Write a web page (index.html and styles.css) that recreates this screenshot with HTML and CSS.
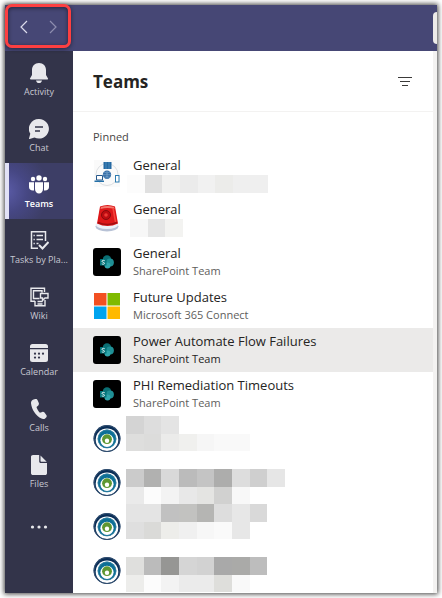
FILE: index.html
```html
<!DOCTYPE html>
<html lang="en">
<head>
    <meta charset="UTF-8">
    <meta name="viewport" content="width=device-width, initial-scale=1.0">
    <title>Teams</title>
    <link rel="stylesheet" href="styles.css">
</head>
<body>
    <!-- Shared avatar artwork -->
    <svg class="defs" aria-hidden="true">
        <symbol id="sharepoint" viewBox="0 0 28 28">
            <circle cx="14" cy="11.500" r="4.200" fill="#0b6f74"/>
            <circle cx="17" cy="14.500" r="3.900" fill="#1f8f95"/>
            <circle cx="14.500" cy="17.500" r="3" fill="#2fa6ac"/>
            <rect x="7" y="11" width="6.500" height="6.500" rx="0.500" fill="#04757b"/>
            <path d="M11.700 12.700c-1.300-.7-2.800-.3-2.700.7.1 1 2.600.8 2.500 1.900-.1 1-1.500 1.200-2.700.5" fill="none" stroke="#fff" stroke-width="0.900"/>
        </symbol>
        <symbol id="rings" viewBox="0 0 28 28">
            <circle cx="14" cy="14.500" r="13.500" fill="#0a2e57"/>
            <circle cx="14" cy="15.800" r="11.300" fill="#fff"/>
            <circle cx="14" cy="14.500" r="13" fill="none" stroke="#3d5877" stroke-width="0.800"/>
            <circle cx="14" cy="14.800" r="9.300" fill="#0d7096"/>
            <circle cx="14" cy="16.300" r="6.600" fill="#fff"/>
            <circle cx="14" cy="15" r="9" fill="none" stroke="#3d84a5" stroke-width="0.700"/>
            <circle cx="14" cy="15.200" r="4.900" fill="#5e9732"/>
            <circle cx="14" cy="16.800" r="2.200" fill="#fff"/>
        </symbol>
    </svg>

    <div class="window">
        <header class="topbar">
            <div class="history">
                <button type="button" aria-label="Back">
                    <svg width="8" height="14" viewBox="0 0 8 14"><path d="M7 1L1 7l6 6"/></svg>
                </button>
                <button type="button" class="forward" aria-label="Forward">
                    <svg width="8" height="14" viewBox="0 0 8 14"><path d="M1 1l6 6-6 6"/></svg>
                </button>
            </div>
            <input class="search" type="text" aria-label="Search">
        </header>

        <div class="content">
            <nav class="rail">
                <a class="rail-item" href="#">
                    <svg viewBox="0 0 20 20"><path fill="currentColor" d="M10 0C5.700 0 3 3.200 3 7v5L1 15.500c-.2.500 0 .9.500.9h17c.5 0 .7-.4.500-.9L17 12V7c0-3.800-2.700-7-7-7zM7 17.400h6c-.3 1.600-1.500 2.600-3 2.600s-2.700-1-3-2.600z"/></svg>
                    <span>Activity</span>
                </a>
                <a class="rail-item" href="#">
                    <svg viewBox="0 0 20 20"><path fill="currentColor" d="M10 0a10 9.800 0 1 1-4.500 18.600L.6 20c-.4.100-.7-.2-.6-.6l1.300-4.600A10 9.800 0 0 1 10 0z"/><path d="M6 8h8M6 12h5" stroke="#33344a" stroke-width="1.500"/></svg>
                    <span>Chat</span>
                </a>
                <a class="rail-item active" href="#">
                    <svg viewBox="0 0 20 20"><g fill="currentColor"><circle cx="10" cy="3" r="2.700"/><circle cx="4" cy="4" r="2.200"/><circle cx="16" cy="4" r="2.200"/><path d="M6 7.300h8V14a4 4.500 0 0 1-8 0zM0 7.300h5V15.500C2 16 0 14.500 0 12zM15 7.300h5V12c0 2.500-2 4-5 3.500z"/></g></svg>
                    <span>Teams</span>
                </a>
                <a class="rail-item" href="#">
                    <svg viewBox="0 0 20 20"><g fill="none" stroke="currentColor" stroke-width="1.500"><path d="M16.500 10V.8h-14v16.400H9"/><path d="M7.500 4.500h6.500M7.500 8.500h6.500M7.500 12.500h2M4.500 4.500h1.300M4.500 8.500h1.300M4.500 12.500h1.300"/><path d="M10 14l3.500 3.500 6-6.500" stroke-width="2"/></g></svg>
                    <span>Tasks by Pla...</span>
                </a>
                <a class="rail-item" href="#">
                    <svg viewBox="0 0 20 20"><g fill="none" stroke="currentColor" stroke-width="1.400"><path d="M15.500 5V1.200H2v13h4"/><path d="M10.500 11.500H4.500V3.800h8.500v2M6 14v4.800h10V13M8.500 14.500h5M8.500 17h5"/><path d="M11.500 6.500h7.500v4.500h-3l-2.500 2.500V11h-2z"/></g></svg>
                    <span>Wiki</span>
                </a>
                <a class="rail-item" href="#">
                    <svg viewBox="0 0 20 20"><path fill="currentColor" d="M3.500 1h13A2.500 2.500 0 0 1 19 3.500V5H1V3.500A2.500 2.500 0 0 1 3.500 1zM1 6.200h18v10.300a2.500 2.500 0 0 1-2.500 2.500h-13A2.500 2.500 0 0 1 1 16.500z"/><g fill="#33344a"><circle cx="6" cy="10.700" r="1.100"/><circle cx="10" cy="10.700" r="1.100"/><circle cx="14" cy="10.700" r="1.100"/><circle cx="6" cy="14.600" r="1.100"/><circle cx="10" cy="14.600" r="1.100"/></g></svg>
                    <span>Calendar</span>
                </a>
                <a class="rail-item" href="#">
                    <svg viewBox="0 0 20 20"><path fill="currentColor" d="M4.500.6l1.800-.5c1-.3 1.900.2 2.300 1.100l1.200 2.900c.3.800.1 1.700-.5 2.300L7.500 8.100c.5 2.100 1.800 4.200 3.400 5.600l2.400-.8c.8-.2 1.700 0 2.200.7l1.800 2.400c.6.800.5 1.800-.2 2.500l-1 .9c-1 .8-2.400.8-3.600.1C7 17 2.600 10.500 2 4.200 1.900 2.400 3 1 4.500.6z"/></svg>
                    <span>Calls</span>
                </a>
                <a class="rail-item" href="#">
                    <svg viewBox="0 0 20 20"><path fill="currentColor" d="M4 0h6.200v6.500c0 .9.600 1.500 1.500 1.500H18v10.200c0 1-.8 1.800-1.800 1.800H4c-1.100 0-2-.8-2-1.800V1.800C2 .8 2.900 0 4 0zM11.500.4l6.200 6.300h-5.500c-.4 0-.7-.3-.7-.7z"/></svg>
                    <span>Files</span>
                </a>
                <a class="rail-item more" href="#" aria-label="More apps">
                    <svg viewBox="0 0 20 20"><g fill="currentColor"><circle cx="3.500" cy="10" r="1.600"/><circle cx="10" cy="10" r="1.600"/><circle cx="16.500" cy="10" r="1.600"/></g></svg>
                </a>
            </nav>

            <main class="panel">
                <div class="panel-header">
                    <h1>Teams</h1>
                    <button type="button" class="filter" aria-label="Filter">
                        <svg width="14" height="9" viewBox="0 0 14 9"><path d="M0 .5h14M2 4.500h10M4 8.500h6"/></svg>
                    </button>
                </div>

                <h2>Pinned</h2>
                <ul class="channels">
                    <li class="channel">
                        <svg class="avatar" viewBox="0 0 28 28">
                            <rect x="1" width="26" height="27" fill="#fafafa"/>
                            <circle cx="14" cy="14.500" r="11" fill="none" stroke="#dcdfe2"/>
                            <path d="M10.500 2h8v7h-8z" fill="#2469a3"/><path d="M13 2v7M16 2v7" stroke="#72a8cf" stroke-width="0.500"/>
                            <circle cx="14" cy="14.700" r="4.200" fill="#376fa8"/><path d="M10 14.700h8M14 10.500v8.400M11 12q3 2 6 0M11 17.500q3-2 6 0" fill="none" stroke="#a6c4df" stroke-width="0.400"/>
                            <path d="M3.500 15.500h6v4.500h-6z" fill="#fff" stroke="#28598c"/><path d="M1.500 20.500h9.500v1.500h-9.500z" fill="#2470a8"/>
                            <rect x="22.500" y="15.500" width="3.500" height="6.500" fill="#fff" stroke="#2d7bb0"/>
                        </svg>
                        <div class="channel-text">
                            <span class="name">General</span>
                            <span class="mosaic" data-shades="fcfcfc e0e0e0 f1f1f0 ebebeb f1f1f1 ececea efefef efefef"></span>
                        </div>
                    </li>
                    <li class="channel">
                        <svg class="avatar" viewBox="0 0 28 28">
                            <ellipse cx="14" cy="22.500" rx="11.500" ry="5" fill="#b8c2d6"/>
                            <ellipse cx="14" cy="20.500" rx="11.300" ry="4.500" fill="#edf1f8"/>
                            <path d="M7 2.500q7.500-3 15 0l3 17q-10.500 5-21 0z" fill="#dd1719"/>
                            <path d="M8 3q6.500-2.200 13 0l.5 2q-7-2-14 0z" fill="#f47a70"/>
                            <circle cx="13" cy="11" r="4.500" fill="#bd0c12" stroke="#850b0d"/>
                            <circle cx="13" cy="11" r="1.800" fill="#ee3a35"/>
                            <path d="M20 4l2.500 14" stroke="#f4453e" stroke-width="1.500"/>
                            <path d="M5 18.500q9 4 19 0" fill="none" stroke="#a20d11" stroke-width="1.500"/>
                        </svg>
                        <div class="channel-text">
                            <span class="name">General</span>
                            <span class="mosaic short" data-shades="f7f7f7 e5e5e5 f3f3f1"></span>
                        </div>
                    </li>
                    <li class="channel">
                        <svg class="avatar dark"><use href="#sharepoint"/></svg>
                        <div class="channel-text">
                            <span class="name">General</span>
                            <span class="team">SharePoint Team</span>
                        </div>
                    </li>
                    <li class="channel">
                        <svg class="avatar" viewBox="0 0 28 28"><path fill="#f25022" d="M1 1h12.500v12.500H1z"/><path fill="#7fba00" d="M14.500 1H27v12.500H14.500z"/><path fill="#00a4ef" d="M1 14.500h12.500V27H1z"/><path fill="#ffb900" d="M14.500 14.500H27V27H14.500z"/></svg>
                        <div class="channel-text">
                            <span class="name">Future Updates</span>
                            <span class="team">Microsoft 365 Connect</span>
                        </div>
                    </li>
                    <li class="channel selected">
                        <svg class="avatar dark"><use href="#sharepoint"/></svg>
                        <div class="channel-text">
                            <span class="name">Power Automate Flow Failures</span>
                            <span class="team">SharePoint Team</span>
                        </div>
                    </li>
                    <li class="channel">
                        <svg class="avatar dark"><use href="#sharepoint"/></svg>
                        <div class="channel-text">
                            <span class="name">PHI Remediation Timeouts</span>
                            <span class="team">SharePoint Team</span>
                        </div>
                    </li>
                    <li class="channel redacted top">
                        <svg class="avatar"><use href="#rings"/></svg>
                        <div class="channel-text">
                            <span class="mosaic" data-shades="d4d4d4 dddddd e4e4e4"></span>
                            <span class="mosaic" data-shades="dededd dcdcdb ebebea f0f0ee f6f6f6 f9f9f9 f9f9f9"></span>
                        </div>
                    </li>
                    <li class="channel redacted">
                        <svg class="avatar"><use href="#rings"/></svg>
                        <div class="channel-text">
                            <span class="mosaic" data-shades="cbcbcb b1b1b0 d9d9d9 bbbbbb c4c4c4 adadac dddddd cfcfcf e6e6e6"></span>
                            <span class="mosaic" data-shades="eaeaea fcfcfc f3f3f3 e8e8e8 e4e4e2 d1d1d0 f8f8f8"></span>
                        </div>
                    </li>
                    <li class="channel redacted top">
                        <svg class="avatar"><use href="#rings"/></svg>
                        <div class="channel-text">
                            <span class="mosaic" data-shades="e4e4e4 e4e4e4 c1c1c1 c2c2c0 b5b5b3 dddddd e7e7e7 d9d9d9"></span>
                            <span class="mosaic" data-shades="dfdfdf dadad8 ededea f0f0f0 f7f7f7 fafafa e7e7e7"></span>
                        </div>
                    </li>
                    <li class="channel redacted">
                        <svg class="avatar"><use href="#rings"/></svg>
                        <div class="channel-text">
                            <span class="mosaic" data-shades="dfdfdd bbbbbb 969694 d5d5d5 d2d2d2 a9a9a9 aaaaa8 bdbdbd"></span>
                            <span class="mosaic" data-shades="ededeb fcfcfc f3f3f3 ebebeb ebebeb dededb f9f9f9"></span>
                        </div>
                    </li>
                </ul>
            </main>

            <div class="edge"></div>
        </div>
    </div>

    <script src="script.js"></script>
</body>
</html>
```

FILE: styles.css
```css
* {
    box-sizing: border-box;
}
body {
    margin: 0;
    padding: 5px;
    background-color: #fff;
    font-family: "Open Sans", "Noto Sans", sans-serif;
    color: #252423;
}
button {
    padding: 0;
    background: none;
    border: none;
    cursor: pointer;
}
.defs {
    position: absolute;
    width: 0;
    height: 0;
}
.window {
    display: flex;
    flex-direction: column;
    min-height: calc(100vh - 10px);
    background-color: #fff;
    box-shadow: 0 0 5px 1px rgba(0,0,0,0.75);
}

/* Top bar */
.topbar {
    display: flex;
    justify-content: space-between;
    align-items: center;
    height: 46px;
    background-color: #464775;
}
.history {
    display: flex;
    justify-content: center;
    align-items: center;
    gap: 21px;
    width: 66px;
    height: 44px;
    padding-top: 2px;
    margin-top: -4px;
    border: 3px solid #fc3f41;
    border-radius: 7px;
    box-shadow: 0 1px 4px rgba(0,0,0,0.5), inset 0 1px 4px rgba(0,0,0,0.5);
    z-index: 1;
}
.history button {
    display: flex;
    color: #dcdcec;
}
.history .forward {
    color: #8e8eaf;
}
.history path {
    fill: none;
    stroke: currentColor;
    stroke-width: 1.2;
}
.search {
    width: 4px;
    height: 32px;
    padding: 0;
    background-color: #edebe9;
    border: none;
    border-radius: 4px 0 0 4px;
}

/* Left rail */
.content {
    display: flex;
    flex: 1;
}
.rail {
    flex: none;
    width: 68px;
    background-color: #33344a;
}
.rail-item {
    display: flex;
    flex-direction: column;
    align-items: center;
    gap: 2px;
    height: 56px;
    padding-top: 12px;
    color: #c8c8d2;
    font-size: 9px;
    line-height: 14px;
    text-decoration: none;
    white-space: nowrap;
}
.rail-item svg {
    width: 20px;
    height: 20px;
    color: #e8e8ec;
}
.rail-item.active {
    background: radial-gradient(circle at left, #5b5ca8 0, #464783 22px, #3d3e66 44px);
    box-shadow: inset 4px 0 #e2e2f6;
    color: #fff;
    font-weight: 600;
}
.rail-item.active svg {
    color: #fff;
}
.rail-item.more {
    padding-top: 18px;
}

/* Teams list */
.panel {
    flex: 1;
    min-width: 0;
}
.panel-header {
    display: flex;
    justify-content: space-between;
    align-items: center;
    height: 61px;
    padding: 0 21px 0 20px;
    border-bottom: 1px solid #f3f2f1;
}
h1 {
    margin: 0;
    padding-top: 2px;
    font-size: 17px;
    line-height: 24px;
    font-weight: 700;
}
.filter {
    display: flex;
}
.filter path {
    stroke: #3b3a39;
    stroke-width: 1;
}
h2 {
    margin: 0;
    padding: 15px 20px 5px;
    color: #484644;
    font-size: 11px;
    line-height: 20px;
    font-weight: 400;
}
.channels {
    margin: 0;
    padding: 0;
    list-style: none;
}
.channel {
    display: flex;
    gap: 12px;
    height: 44px;
    padding: 4px 20px 0;
}
.channel.selected {
    background-color: #ebeae9;
}
.avatar {
    flex: none;
    width: 28px;
    height: 28px;
    margin-top: 4px;
}
.avatar.dark {
    background-color: #000;
    border-radius: 3px;
}
.channel-text {
    display: flex;
    flex-direction: column;
    min-width: 0;
    white-space: nowrap;
}
.name {
    font-size: 13px;
    line-height: 19px;
}
.team {
    color: #605e5c;
    font-size: 11px;
    line-height: 15px;
}
.selected .team {
    color: #252423;
}

/* Blurred out names */
.mosaic {
    display: flex;
    height: 18px;
    margin-left: -6px;
}
.mosaic.short {
    margin-left: -3px;
}
.mosaic i {
    width: 18px;
}
.mosaic i:nth-child(3n+2) {
    width: 17px;
}
.mosaic + .mosaic {
    height: 17px;
}
.redacted {
    padding-top: 0;
}
.redacted .avatar {
    margin-top: 8px;
}
.redacted .channel-text {
    padding-top: 9px;
    margin-left: -1px;
}
.redacted.top .channel-text {
    padding-top: 0;
}
.edge {
    flex: none;
    width: 4px;
    background-color: #f3f2f1;
}
```

FILE: script.js
```js
// Fill each mosaic with one block per shade
document.querySelectorAll('.mosaic').forEach(mosaic => {
    mosaic.dataset.shades.split(' ').forEach(shade => {
        const block = document.createElement('i');
        block.style.backgroundColor = '#' + shade;
        mosaic.appendChild(block);
    });
});
```
